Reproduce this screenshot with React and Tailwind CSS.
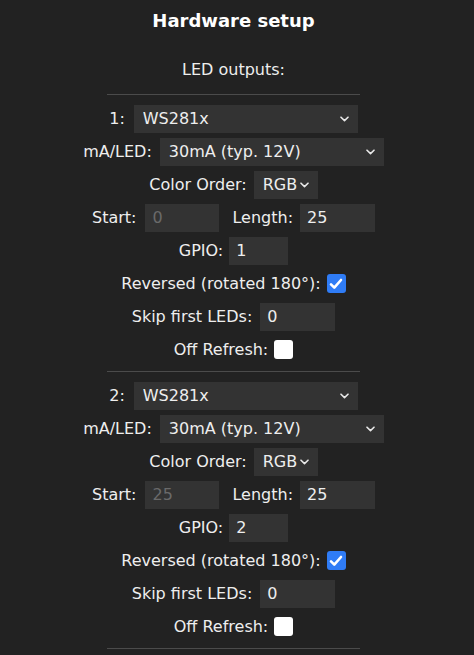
import { useState } from "react";

const Chevron = ({ className }) => (
  <svg
    className={className}
    width="9"
    height="6"
    viewBox="0 0 9 6"
    fill="none"
    stroke="#e8e8e8"
    strokeWidth="1.6"
    strokeLinecap="round"
    strokeLinejoin="round"
  >
    <path d="M1 1.2 4.5 4.6 8 1.2" />
  </svg>
);

const Select = ({ value, width, pad = "pr-6", chevronRight = "right-[10px]" }) => (
  <div className={`relative h-7 ${width}`}>
    <select
      defaultValue={value}
      className={`appearance-none w-full h-full bg-[#333] text-[#eee] pl-[9px] ${pad} outline-none rounded-none`}
    >
      <option>{value}</option>
    </select>
    <Chevron className={`absolute top-[11px] pointer-events-none ${chevronRight}`} />
  </div>
);

const Input = ({ value, width, disabled }) => (
  <input
    defaultValue={value}
    disabled={disabled}
    className={`h-7 ${width} bg-[#333] pl-[7px] outline-none ${
      disabled ? "text-[#6a6a6a]" : "text-[#eee]"
    }`}
  />
);

const Check = ({ checked: init }) => {
  const [checked, setChecked] = useState(init);
  return (
    <button
      onClick={() => setChecked(!checked)}
      className={`w-[19px] h-[19px] rounded-[3px] flex items-center justify-center ${
        checked ? "bg-[#2f7cf6]" : "bg-white"
      }`}
    >
      {checked && (
        <svg width="14" height="12" viewBox="0 0 14 12" fill="none">
          <path
            d="M2 6.3 5.3 9.6 12 2"
            stroke="white"
            strokeWidth="2.6"
            strokeLinecap="round"
            strokeLinejoin="round"
          />
        </svg>
      )}
    </button>
  );
};

const Row = ({ children }) => (
  <div className="h-[33px] flex items-center justify-center">{children}</div>
);

const Hr = () => <div className="mx-auto w-[253px] border-t border-[#4b4b4b]" />;

const Output = ({ n, start, gpio }) => (
  <div className="pt-[7px] pb-[5px]">
    <Row>
      <span className="mr-[9px]">{n}:</span>
      <Select value="WS281x" width="w-[224px]" chevronRight="right-[9px]" />
    </Row>
    <Row>
      <span className="mr-[8px]">mA/LED:</span>
      <Select value="30mA (typ. 12V)" width="w-[224px]" chevronRight="right-[9px]" />
    </Row>
    <Row>
      <span className="mr-[7px]">Color Order:</span>
      <Select value="RGB" width="w-[64px]" pad="pr-[12px]" chevronRight="right-[9px]" />
    </Row>
    <Row>
      <span className="mr-[9px]">Start:</span>
      <Input value={start} width="w-[74px]" disabled />
      <span className="ml-[13px] mr-[7px]">Length:</span>
      <Input value="25" width="w-[75px]" />
    </Row>
    <Row>
      <span className="mr-[6px]">GPIO:</span>
      <Input value={gpio} width="w-[59px]" />
    </Row>
    <Row>
      <span className="mr-[6px]">Reversed (rotated 180°):</span>
      <Check checked />
    </Row>
    <Row>
      <span className="mr-[8px]">Skip first LEDs:</span>
      <Input value="0" width="w-[75px]" />
    </Row>
    <Row>
      <span className="mr-[6px]">Off Refresh:</span>
      <Check checked={false} />
    </Row>
  </div>
);

export default function App() {
  return (
    <div className="min-h-screen bg-[#222] text-[#eee] text-[16px] pr-[7px] font-['DejaVu_Sans',Verdana,sans-serif]">
      <h2 className="h-10 flex items-center justify-center text-[18px] font-bold text-white">
        Hardware setup
      </h2>
      <div className="mt-[18px] h-6 flex items-center justify-center">LED outputs:</div>
      <div className="h-3" />
      <Hr />
      <Output n={1} start="0" gpio="1" />
      <Hr />
      <Output n={2} start="25" gpio="2" />
      <Hr />
    </div>
  );
}
